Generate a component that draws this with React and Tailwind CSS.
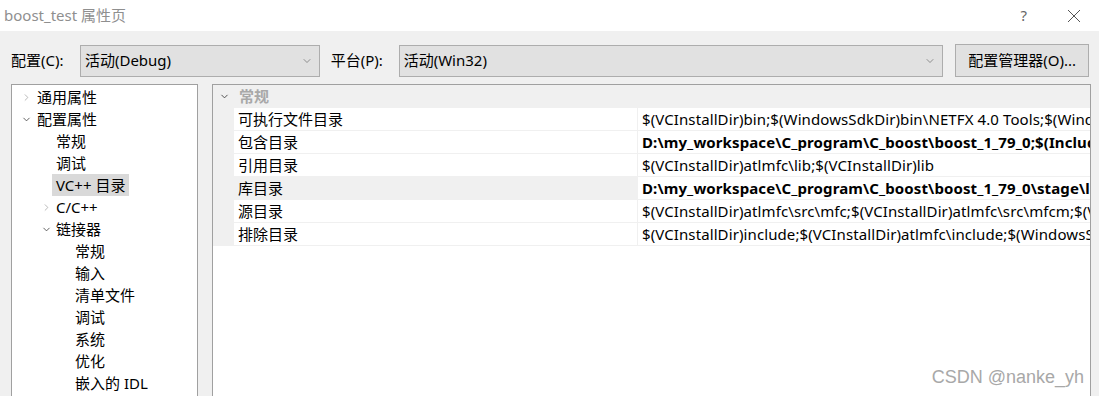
import { ChevronDown, ChevronRight } from 'lucide-react'

const font = { fontFamily: '"Noto Sans", "Noto Sans CJK SC", sans-serif' }

const tree = [
  { label: '通用属性', level: 0, arrow: 'right' },
  { label: '配置属性', level: 0, arrow: 'down' },
  { label: '常规', level: 1 },
  { label: '调试', level: 1 },
  { label: 'VC++ 目录', level: 1, selected: true },
  { label: 'C/C++', level: 1, arrow: 'right' },
  { label: '链接器', level: 1, arrow: 'down' },
  { label: '常规', level: 2 },
  { label: '输入', level: 2 },
  { label: '清单文件', level: 2 },
  { label: '调试', level: 2 },
  { label: '系统', level: 2 },
  { label: '优化', level: 2 },
  { label: '嵌入的 IDL', level: 2 },
]

const rows = [
  { name: '可执行文件目录', value: '$(VCInstallDir)bin;$(WindowsSdkDir)bin\\NETFX 4.0 Tools;$(WindowsSdkDir)bin;$(VSInstallDir)Common7\\Tools\\bin' },
  { name: '包含目录', value: 'D:\\my_workspace\\C_program\\C_boost\\boost_1_79_0;$(IncludePath)', bold: true },
  { name: '引用目录', value: '$(VCInstallDir)atlmfc\\lib;$(VCInstallDir)lib' },
  { name: '库目录', value: 'D:\\my_workspace\\C_program\\C_boost\\boost_1_79_0\\stage\\lib;$(LibraryPath)', bold: true, active: true },
  { name: '源目录', value: '$(VCInstallDir)atlmfc\\src\\mfc;$(VCInstallDir)atlmfc\\src\\mfcm;$(VCInstallDir)atlmfc\\src\\atl' },
  { name: '排除目录', value: '$(VCInstallDir)include;$(VCInstallDir)atlmfc\\include;$(WindowsSdkDir)include' },
]

const indent = ['pl-[25px]', 'pl-[44px]', 'pl-[63px]']
const arrowPos = ['left-[9px]', 'left-[29px]', 'left-[48px]']

function Select({ value, className }) {
  return (
    <div className={`flex h-[32px] items-center justify-between border border-[#adadad] bg-[#e1e1e1] pl-[4px] pr-[6px] text-[15px] text-black ${className}`}>
      <span>{value}</span>
      <ChevronDown size={12} strokeWidth={1.2} className="text-[#555]" />
    </div>
  )
}

export default function App() {
  return (
    <div className="relative h-[396px] w-[1099px] overflow-hidden bg-[#f0f0f0]" style={font}>
      <div className="flex h-[31px] items-center justify-between bg-white pl-[4px] pr-[18px]">
        <span className="text-[15px] text-[#8f8f8f]">boost_test 属性页</span>
        <div className="flex items-center gap-[40px] text-[#666]">
          <span className="text-[15px]">?</span>
          <svg width="14" height="14" viewBox="0 0 14 14" stroke="#555" strokeWidth="1">
            <path d="M1 1L13 13M13 1L1 13" />
          </svg>
        </div>
      </div>

      <div className="mt-[13px] flex items-center pl-[11px] pr-[10px] text-[15px] text-black">
        <span className="w-[69px]">配置(C):</span>
        <Select value="活动(Debug)" className="w-[240px]" />
        <span className="ml-[11px] w-[68px]">平台(P):</span>
        <Select value="活动(Win32)" className="w-[545px]" />
        <div className="ml-[12px] flex h-[33px] w-[134px] items-center justify-center border border-[#adadad] bg-[#e1e1e1]">
          配置管理器(O)...
        </div>
      </div>

      <div className="mt-[7px] flex items-start pl-[11px]">
        <div className="h-[330px] w-[187px] border border-[#a0a0a0] bg-white pt-[1px] text-[15px] text-black">
          {tree.map((t, i) => (
            <div key={i} className={`relative flex h-[22px] items-center ${indent[t.level]}`}>
              {t.arrow === 'right' && (
                <ChevronRight size={11} strokeWidth={1.5} className={`absolute text-[#9a9a9a] ${arrowPos[t.level]}`} />
              )}
              {t.arrow === 'down' && (
                <ChevronDown size={11} strokeWidth={1.8} className={`absolute text-[#444] ${arrowPos[t.level]}`} />
              )}
              <span className={t.selected ? '-ml-[4px] bg-[#d9d9d9] px-[4px] leading-[22px]' : ''}>{t.label}</span>
            </div>
          ))}
        </div>

        <div className="ml-[14px] h-[330px] w-[879px] border border-[#a0a0a0] bg-white">
          <div className="flex h-[23px] items-center bg-[#f0f0f0] pl-[4px]">
            <ChevronDown size={11} strokeWidth={2} className="ml-[2px] text-[#444]" />
            <span className="ml-[9px] text-[15px] font-bold text-[#a8a8a8]">常规</span>
          </div>
          {rows.map((r, i) => (
            <div key={i} className="flex h-[23px] bg-[#f0f0f0] pb-[1px]">
              <div className="w-[21px] shrink-0" />
              <div className={`flex w-[403px] shrink-0 items-center pl-[4px] text-[15px] text-black ${r.active ? 'bg-[#f0f0f0]' : 'bg-white'}`}>
                {r.name}
              </div>
              <div className="w-[1px] shrink-0" />
              <div className={`flex min-w-0 flex-1 items-center overflow-hidden whitespace-nowrap bg-white pl-[4px] text-[15px] tracking-[0.1px] text-black ${r.bold ? 'font-bold' : ''}`}>
                {r.value}
              </div>
            </div>
          ))}
        </div>
      </div>

      <div className="absolute bottom-[5px] right-[15px] text-[18px] text-[#a8a8a8]" style={{ fontFamily: '"Liberation Sans", sans-serif' }}>
        CSDN @nanke_yh
      </div>
    </div>
  )
}
